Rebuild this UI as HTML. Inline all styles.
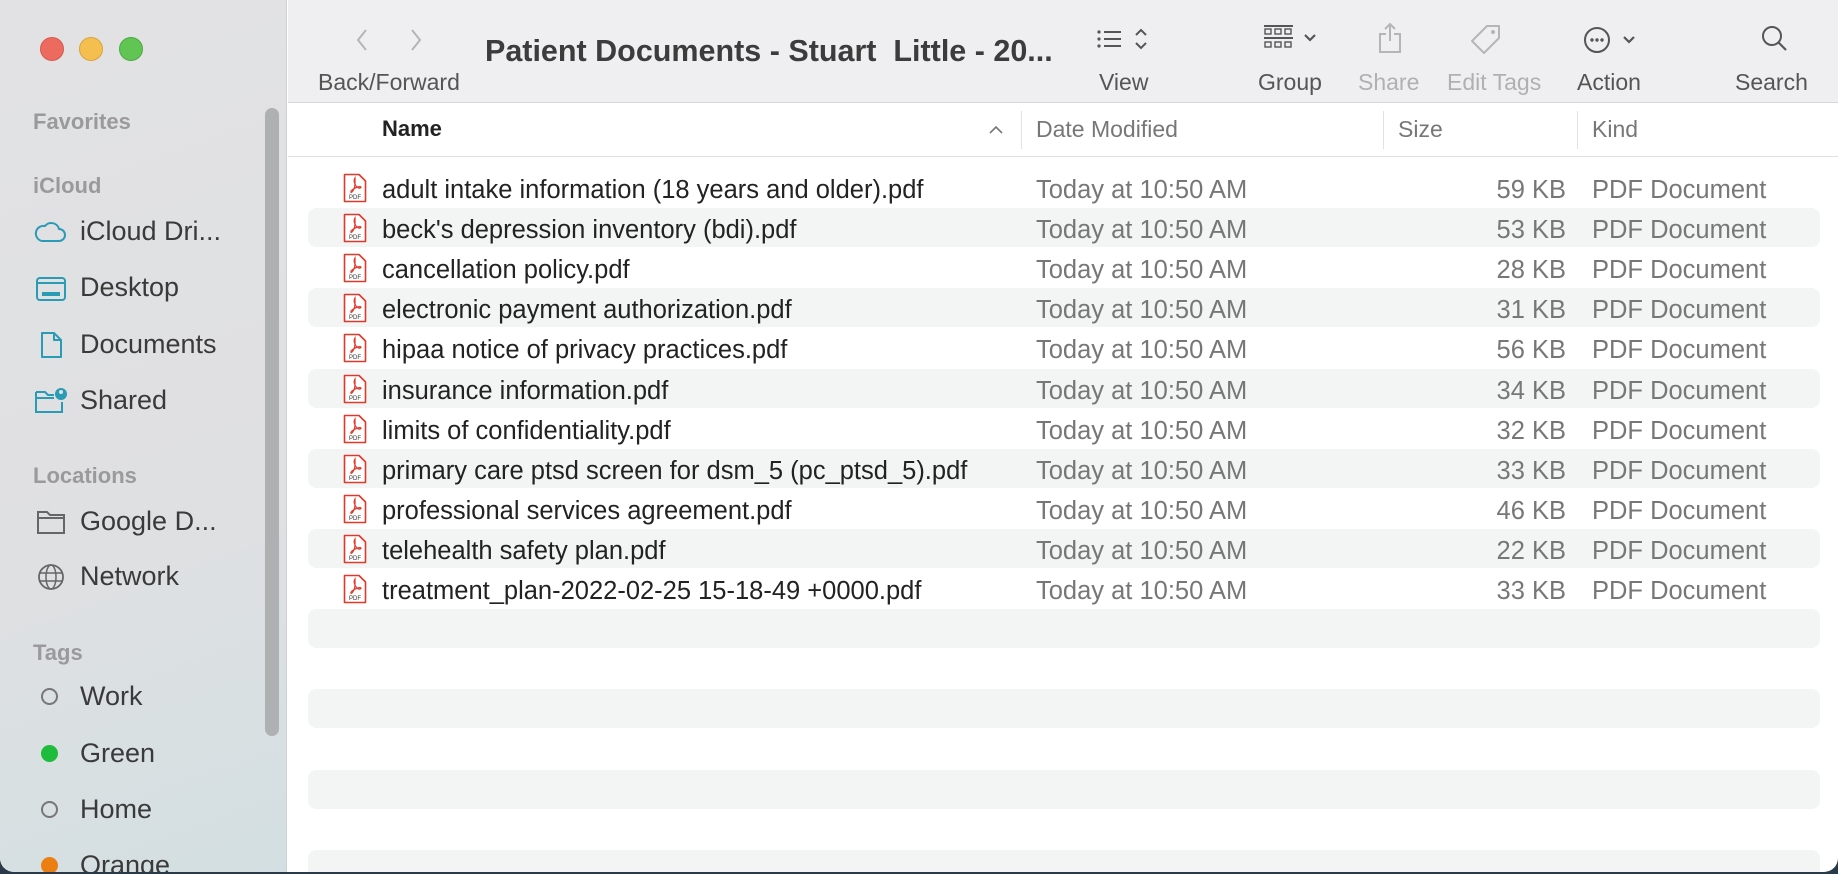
<!DOCTYPE html>
<html><head><meta charset="utf-8"><style>
*{margin:0;padding:0;box-sizing:border-box}
body{width:1838px;height:874px;overflow:hidden;background:#2b3a48;font-family:"Liberation Sans",sans-serif;position:relative}
.win{position:absolute;left:0;top:0;width:1838px;height:872px;background:#fff;border-radius:0 0 14px 14px;overflow:hidden}
.side{position:absolute;left:0;top:0;width:287px;height:872px;background:linear-gradient(160deg,#e2e2e4 0%,#dfe0e2 60%,#d3dfe2 100%);border-right:1px solid #d0d0d0}
.abs{position:absolute;white-space:nowrap}
.lab{color:#9a9a9c;font-size:22px;font-weight:bold;left:33px}
.it{color:#3a3a3a;font-size:27px;left:80px}
.tb{position:absolute;left:288px;top:0;width:1550px;height:103px;background:#efeff1;border-bottom:1px solid #d8d8d8}
.tl{font-size:23px;color:#555}
.dis{color:#b0b0b0}
.hdr{position:absolute;left:288px;top:103px;width:1550px;height:54px;border-bottom:1px solid #e0e0e0;background:#fff}
.sep{position:absolute;top:8px;width:1px;height:38px;background:#e2e2e2}
.row{position:absolute;left:308px;width:1512px;height:39px;border-radius:8px}
.s{background:#f3f4f4}
.t{position:absolute;top:7.5px;font-size:25.5px;white-space:nowrap}
.n{left:74px;color:#222}
.d{left:728px;color:#777}
.z{right:254px;color:#777}
.k{left:1284px;color:#777}
.ic{position:absolute;left:35px;top:5px}
</style></head><body>
<div class="win">
<div class="side">
 <div class="abs" style="left:40px;top:37px;width:24px;height:24px;border-radius:50%;background:#ed6a5e;border:1px solid #d35a4f"></div>
 <div class="abs" style="left:79px;top:37px;width:24px;height:24px;border-radius:50%;background:#f5bf4f;border:1px solid #d8a33c"></div>
 <div class="abs" style="left:119px;top:37px;width:24px;height:24px;border-radius:50%;background:#61c554;border:1px solid #4ea945"></div>
 <div class="abs" style="left:265px;top:108px;width:14px;height:628px;border-radius:7px;background:#aeb0b1"></div>
 <div class="abs lab" style="top:109px">Favorites</div>
 <div class="abs lab" style="top:173px">iCloud</div>
 <svg class="abs" style="left:34px;top:219px" width="32" height="26" viewBox="0 0 32 26"><path d="M8 22 H25 A6 6 0 0 0 25 10 A8 8 0 0 0 11 7 A7 7 0 0 0 8 22 Z" fill="none" stroke="#2a9bb5" stroke-width="2"/></svg>
 <div class="abs it" style="top:216px">iCloud Dri...</div>
 <svg class="abs" style="left:36px;top:276px" width="30" height="26"><rect x="1" y="2" width="28" height="22" rx="3" fill="none" stroke="#2a9bb5" stroke-width="2"/><line x1="1" y1="7" x2="29" y2="7" stroke="#2a9bb5" stroke-width="2"/><rect x="6" y="16" width="18" height="4" fill="#2a9bb5"/></svg>
 <div class="abs it" style="top:272px">Desktop</div>
 <svg class="abs" style="left:40px;top:331px" width="24" height="28"><path d="M2 2 H14 L21 9 V26 H2 Z M14 2 V9 H21" fill="none" stroke="#2a9bb5" stroke-width="2" stroke-linejoin="round"/></svg>
 <div class="abs it" style="top:329px">Documents</div>
 <svg class="abs" style="left:34px;top:386px" width="34" height="28"><path d="M2 6 V26 H28 V16 M2 6 H11 L14 9 H20 M2 12 H20" fill="none" stroke="#2a9bb5" stroke-width="2"/><circle cx="27" cy="8" r="6" fill="#2a9bb5"/><circle cx="27" cy="6" r="2" fill="#e0e0e2"/></svg>
 <div class="abs it" style="top:385px">Shared</div>
 <div class="abs lab" style="top:463px">Locations</div>
 <svg class="abs" style="left:36px;top:509px" width="30" height="26"><path d="M2 3 H11 L14 6 H28 V24 H2 Z M2 9 H28" fill="none" stroke="#666" stroke-width="2"/></svg>
 <div class="abs it" style="top:506px">Google D...</div>
 <svg class="abs" style="left:37px;top:563px" width="28" height="28"><circle cx="14" cy="14" r="12" fill="none" stroke="#666" stroke-width="1.8"/><ellipse cx="14" cy="14" rx="5" ry="12" fill="none" stroke="#666" stroke-width="1.5"/><path d="M3 10 H25 M3 18 H25" stroke="#666" stroke-width="1.5"/></svg>
 <div class="abs it" style="top:561px">Network</div>
 <div class="abs lab" style="top:640px">Tags</div>
 <div class="abs" style="left:41px;top:688px;width:17px;height:17px;border-radius:50%;border:2px solid #777"></div>
 <div class="abs it" style="top:681px">Work</div>
 <div class="abs" style="left:41px;top:745px;width:17px;height:17px;border-radius:50%;background:#1ebc3c"></div>
 <div class="abs it" style="top:738px">Green</div>
 <div class="abs" style="left:41px;top:801px;width:17px;height:17px;border-radius:50%;border:2px solid #777"></div>
 <div class="abs it" style="top:794px">Home</div>
 <div class="abs" style="left:41px;top:857px;width:17px;height:17px;border-radius:50%;background:#ec7f12"></div>
 <div class="abs it" style="top:850px">Orange</div>
</div>
<div class="tb">
 <svg class="abs" style="left:66px;top:27px" width="16" height="26"><path d="M12 3 L4 13 L12 23" fill="none" stroke="#b5b5b5" stroke-width="2"/></svg>
 <svg class="abs" style="left:120px;top:27px" width="16" height="26"><path d="M4 3 L12 13 L4 23" fill="none" stroke="#b5b5b5" stroke-width="2"/></svg>
 <div class="abs tl" style="left:30px;top:69px">Back/Forward</div>
 <div class="abs" style="left:197px;top:34px;font-size:30.5px;font-weight:bold;color:#3c3c3c">Patient Documents - Stuart&nbsp; Little - 20...</div>
 <svg class="abs" style="left:808px;top:28px" width="52" height="24"><g fill="#555"><circle cx="3" cy="4" r="1.6"/><circle cx="3" cy="11" r="1.6"/><circle cx="3" cy="18" r="1.6"/></g><path d="M8 4 H25 M8 11 H25 M8 18 H25" stroke="#555" stroke-width="2"/><path d="M40 7 L45 2 L50 7 M40 15 L45 20 L50 15" fill="none" stroke="#555" stroke-width="2"/></svg>
 <div class="abs tl" style="left:811px;top:69px">View</div>
 <svg class="abs" style="left:975px;top:24px" width="56" height="28"><path d="M1 2 H30 M1 14 H30" stroke="#555" stroke-width="2"/><g fill="none" stroke="#555" stroke-width="1.4"><rect x="2" y="5" width="6" height="5"/><rect x="12" y="5" width="6" height="5"/><rect x="22" y="5" width="6" height="5"/><rect x="2" y="18" width="6" height="5"/><rect x="12" y="18" width="6" height="5"/><rect x="22" y="18" width="6" height="5"/></g><path d="M42 11 L47 16 L52 11" fill="none" stroke="#555" stroke-width="2.2"/></svg>
 <div class="abs tl" style="left:970px;top:69px">Group</div>
 <svg class="abs" style="left:1089px;top:22px" width="26" height="32"><path d="M13 2 V19 M8 7 L13 2 L18 7 M9 12 H3 V30 H23 V12 H17" fill="none" stroke="#b5b5b5" stroke-width="2"/></svg>
 <div class="abs tl dis" style="left:1070px;top:69px">Share</div>
 <svg class="abs" style="left:1181px;top:23px" width="34" height="34"><path d="M18 3 H30 V15 L15 30 L3 18 Z" fill="none" stroke="#b5b5b5" stroke-width="2" stroke-linejoin="round"/><circle cx="24" cy="9" r="2" fill="#b5b5b5"/></svg>
 <div class="abs tl dis" style="left:1159px;top:69px">Edit Tags</div>
 <svg class="abs" style="left:1296px;top:26px" width="56" height="28"><circle cx="13" cy="14" r="12" fill="none" stroke="#555" stroke-width="2"/><g fill="#555"><circle cx="8" cy="14" r="1.7"/><circle cx="13" cy="14" r="1.7"/><circle cx="18" cy="14" r="1.7"/></g><path d="M40 11 L45 16 L50 11" fill="none" stroke="#555" stroke-width="2.2"/></svg>
 <div class="abs tl" style="left:1289px;top:69px">Action</div>
 <svg class="abs" style="left:1473px;top:25px" width="28" height="28"><circle cx="11" cy="11" r="9" fill="none" stroke="#555" stroke-width="2"/><path d="M17.5 17.5 L25 25" stroke="#555" stroke-width="2.2"/></svg>
 <div class="abs tl" style="left:1447px;top:69px">Search</div>
</div>
<div class="hdr">
 <div class="abs" style="left:94px;top:13px;font-size:22px;font-weight:bold;color:#222">Name</div>
 <svg class="abs" style="left:700px;top:21px" width="16" height="12"><path d="M2 9 L8 3 L14 9" fill="none" stroke="#777" stroke-width="1.6"/></svg>
 <div class="sep" style="left:733px"></div>
 <div class="abs" style="left:748px;top:13px;font-size:23px;color:#777">Date Modified</div>
 <div class="sep" style="left:1095px"></div>
 <div class="abs" style="left:1110px;top:13px;font-size:23px;color:#777">Size</div>
 <div class="sep" style="left:1289px"></div>
 <div class="abs" style="left:1304px;top:13px;font-size:23px;color:#777">Kind</div>
</div>
<svg width="0" height="0" style="position:absolute"><defs><symbol id="pdf" viewBox="0 0 24 30"><path d="M1.5 1.5 H16 L22.5 8 V28.5 H1.5 Z" fill="#fff" stroke="#e0392b" stroke-width="1.6" stroke-linejoin="round"/><path d="M12 5 C10 8 12 12 14 14 C16 16 18 15 18 14 C17 13 13 14 9 17 C7 19 8 20 9 19 C11 17 12 13 12 10 C12 7 12 5 12 5Z" fill="none" stroke="#e0392b" stroke-width="1.2"/><text x="12" y="26" font-size="6" text-anchor="middle" fill="#333" font-family="Liberation Sans">PDF</text></symbol></defs></svg>
<div class="row" style="top:168px"><svg class="ic" width="24" height="30"><use href="#pdf"/></svg><div class="t n">adult intake information (18 years and older).pdf</div><div class="t d">Today at 10:50 AM</div><div class="t z">59 KB</div><div class="t k">PDF Document</div></div>
<div class="row s" style="top:208px"><svg class="ic" width="24" height="30"><use href="#pdf"/></svg><div class="t n">beck's depression inventory (bdi).pdf</div><div class="t d">Today at 10:50 AM</div><div class="t z">53 KB</div><div class="t k">PDF Document</div></div>
<div class="row" style="top:248px"><svg class="ic" width="24" height="30"><use href="#pdf"/></svg><div class="t n">cancellation policy.pdf</div><div class="t d">Today at 10:50 AM</div><div class="t z">28 KB</div><div class="t k">PDF Document</div></div>
<div class="row s" style="top:288px"><svg class="ic" width="24" height="30"><use href="#pdf"/></svg><div class="t n">electronic payment authorization.pdf</div><div class="t d">Today at 10:50 AM</div><div class="t z">31 KB</div><div class="t k">PDF Document</div></div>
<div class="row" style="top:328px"><svg class="ic" width="24" height="30"><use href="#pdf"/></svg><div class="t n">hipaa notice of privacy practices.pdf</div><div class="t d">Today at 10:50 AM</div><div class="t z">56 KB</div><div class="t k">PDF Document</div></div>
<div class="row s" style="top:369px"><svg class="ic" width="24" height="30"><use href="#pdf"/></svg><div class="t n">insurance information.pdf</div><div class="t d">Today at 10:50 AM</div><div class="t z">34 KB</div><div class="t k">PDF Document</div></div>
<div class="row" style="top:409px"><svg class="ic" width="24" height="30"><use href="#pdf"/></svg><div class="t n">limits of confidentiality.pdf</div><div class="t d">Today at 10:50 AM</div><div class="t z">32 KB</div><div class="t k">PDF Document</div></div>
<div class="row s" style="top:449px"><svg class="ic" width="24" height="30"><use href="#pdf"/></svg><div class="t n">primary care ptsd screen for dsm_5 (pc_ptsd_5).pdf</div><div class="t d">Today at 10:50 AM</div><div class="t z">33 KB</div><div class="t k">PDF Document</div></div>
<div class="row" style="top:489px"><svg class="ic" width="24" height="30"><use href="#pdf"/></svg><div class="t n">professional services agreement.pdf</div><div class="t d">Today at 10:50 AM</div><div class="t z">46 KB</div><div class="t k">PDF Document</div></div>
<div class="row s" style="top:529px"><svg class="ic" width="24" height="30"><use href="#pdf"/></svg><div class="t n">telehealth safety plan.pdf</div><div class="t d">Today at 10:50 AM</div><div class="t z">22 KB</div><div class="t k">PDF Document</div></div>
<div class="row" style="top:569px"><svg class="ic" width="24" height="30"><use href="#pdf"/></svg><div class="t n">treatment_plan-2022-02-25 15-18-49 +0000.pdf</div><div class="t d">Today at 10:50 AM</div><div class="t z">33 KB</div><div class="t k">PDF Document</div></div>
<div class="row s" style="top:609px"></div>
<div class="row s" style="top:689px"></div>
<div class="row s" style="top:770px"></div>
<div class="row s" style="top:850px"></div>
</div>
</body></html>
